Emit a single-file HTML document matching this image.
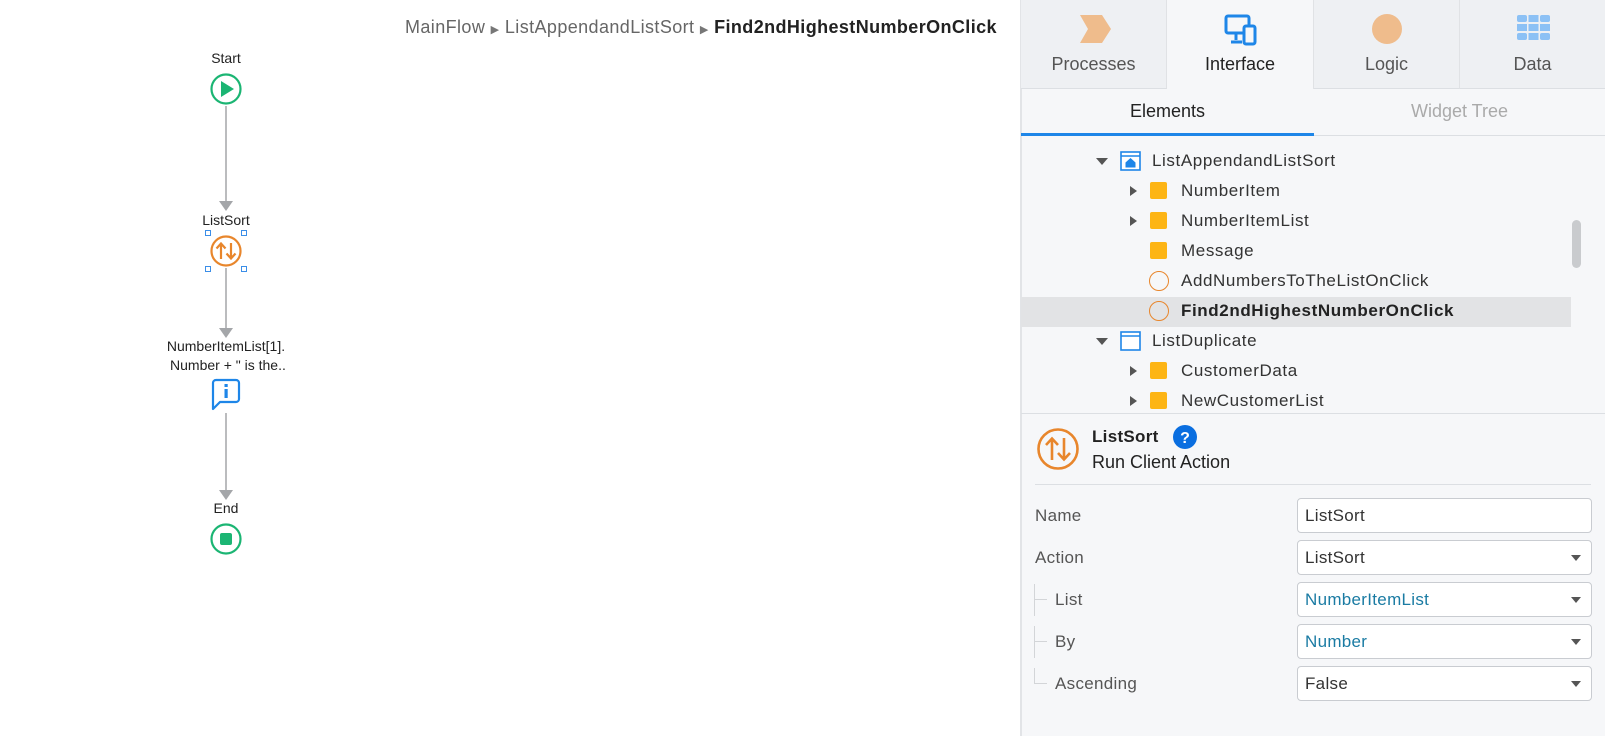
<!DOCTYPE html>
<html><head><meta charset="utf-8"><style>
*{margin:0;padding:0;box-sizing:border-box}
body{width:1605px;height:736px;background:#fff;position:relative;overflow:hidden;font-family:"Liberation Sans",sans-serif;color:#222}
.a{position:absolute;white-space:nowrap}
.lbl{font-size:14px;color:#222;text-align:center;width:200px;left:126px}
.tab{position:absolute;top:0;height:89px;background:#eef0f3;border-right:1px solid #e0e2e5;border-bottom:1px solid #dcdfe3}
.tab span{position:absolute;left:0;right:0;top:54px;text-align:center;font-size:18px;color:#555}
.tr{position:absolute;left:1021px;width:550px;height:30px;font-size:17px;line-height:30px;color:#333;letter-spacing:0.6px}
.car{position:absolute;width:0;height:0}
.cr{border-top:5px solid transparent;border-bottom:5px solid transparent;border-left:7px solid #555;top:10px}
.cd{border-left:6px solid transparent;border-right:6px solid transparent;border-top:7px solid #555;top:12px}
.sq{position:absolute;top:6px;width:17px;height:17px;background:#fdb515;border-radius:2px}
.ci{position:absolute;top:5px;width:20px;height:20px;border:1.8px solid #e8862c;border-radius:50%}
.fl{position:absolute;font-size:17px;color:#555;line-height:35px;letter-spacing:0.3px}
.inp{position:absolute;left:1297px;width:295px;height:35px;background:#fff;border:1px solid #c9ccd1;border-radius:4px;font-size:17px;line-height:33px;padding-left:7px;color:#333;letter-spacing:0.3px}
.dd:after{content:"";position:absolute;right:10px;top:14px;border-left:5px solid transparent;border-right:5px solid transparent;border-top:6px solid #555}
.blue{color:#1a7ba3}
</style></head><body>
<!-- breadcrumb -->
<div class="a" style="left:405px;top:17px;font-size:18px;color:#666;letter-spacing:0.4px">MainFlow <span style="font-size:11px;color:#777">&#9654;</span> ListAppendandListSort <span style="font-size:11px;color:#777">&#9654;</span> <b style="color:#222">Find2ndHighestNumberOnClick</b></div>

<!-- flow -->
<svg class="a" style="left:0;top:0" width="460" height="600">
<g stroke="#a4a6a9" stroke-width="1.5"><line x1="226" y1="106" x2="226" y2="203"/><line x1="226" y1="268" x2="226" y2="330"/><line x1="226" y1="413" x2="226" y2="492"/></g>
<g fill="#a4a6a9"><path d="M219 201h14l-7 10z"/><path d="M219 328h14l-7 10z"/><path d="M219 490h14l-7 10z"/></g>
<circle cx="226" cy="89" r="14.5" fill="#fff" stroke="#1bb573" stroke-width="2.2"/><path d="M221 81v16l13-8z" fill="#1bb573"/>
<circle cx="226" cy="251" r="14.5" fill="#fff" stroke="#e8862c" stroke-width="2.2"/>
<g stroke="#e8862c" stroke-width="2.2" fill="none"><path d="M221 259v-15M216.5 248.5l4.5-5 4.5 5M231 243v15M226.5 253.5l4.5 5 4.5-5"/></g>
<g fill="#fff" stroke="#3b8ee8" stroke-width="1"><rect x="205.5" y="230.5" width="5" height="5"/><rect x="241.5" y="230.5" width="5" height="5"/><rect x="205.5" y="266.5" width="5" height="5"/><rect x="241.5" y="266.5" width="5" height="5"/></g>
<path d="M213 383a3 3 0 0 1 3-3h20a3 3 0 0 1 3 3v16a3 3 0 0 1-3 3h-16l-7 7z" fill="#fff" stroke="#1e86e8" stroke-width="2.2" stroke-linejoin="round"/>
<rect x="224.5" y="389" width="3.2" height="9" fill="#1e86e8"/><rect x="224.5" y="384" width="3.2" height="3" fill="#1e86e8"/>
<circle cx="226" cy="539" r="14.5" fill="#fff" stroke="#1bb573" stroke-width="2.2"/><rect x="220" y="533" width="12" height="12" rx="2" fill="#1bb573"/>
</svg>
<div class="a lbl" style="top:50px">Start</div>
<div class="a lbl" style="top:212px">ListSort</div>
<div class="a lbl" style="top:337px;line-height:19px">NumberItemList[1].<br>&nbsp;Number + " is the..</div>
<div class="a lbl" style="top:500px">End</div>

<!-- panel -->
<div class="a" style="left:1020px;top:0;width:585px;height:736px;background:#f6f7f9;border-left:2px solid #e2e4e7"></div>
<div class="tab" style="left:1021px;width:146px"><svg class="a" style="left:59px;top:15px" width="32" height="28"><path d="M0 0h22l9 14-9 14H0l8-14z" fill="#efbc8c"/></svg><span>Processes</span></div>
<div class="tab" style="left:1167px;width:147px;background:#f6f7f9;border-bottom:none"><svg class="a" style="left:57px;top:14px" width="34" height="32"><g fill="none" stroke="#1e86e8" stroke-width="3"><rect x="2" y="2" width="23" height="17" rx="2"/><rect x="20" y="12" width="11" height="18" rx="2" fill="#f6f7f9"/></g><path d="M12 20v6M7 28h11" stroke="#1e86e8" stroke-width="3"/></svg><span style="color:#222">Interface</span></div>
<div class="tab" style="left:1314px;width:146px"><svg class="a" style="left:57px;top:13px" width="32" height="32"><circle cx="16" cy="16" r="15" fill="#efbc8c"/></svg><span>Logic</span></div>
<div class="tab" style="left:1460px;width:145px;border-right:none"><svg class="a" style="left:57px;top:15px" width="33" height="26"><g fill="#8cc1f5"><rect x="0" y="0" width="10" height="7" rx="2"/><rect x="11.5" y="0" width="10" height="7"/><rect x="23" y="0" width="10" height="7" rx="2"/><rect x="0" y="9" width="10" height="7"/><rect x="11.5" y="9" width="10" height="7"/><rect x="23" y="9" width="10" height="7"/><rect x="0" y="18" width="10" height="7" rx="2"/><rect x="11.5" y="18" width="10" height="7"/><rect x="23" y="18" width="10" height="7" rx="2"/></g></svg><span>Data</span></div>
<div class="a" style="left:1021px;top:89px;width:584px;height:47px;border-bottom:1px solid #dcdfe3"></div>
<div class="a" style="left:1021px;top:133px;width:293px;height:3px;background:#1e86e8"></div>
<div class="a" style="left:1021px;top:101px;width:293px;text-align:center;font-size:18px;color:#222">Elements</div>
<div class="a" style="left:1314px;top:101px;width:291px;text-align:center;font-size:18px;color:#aaa">Widget Tree</div>

<!-- tree -->
<div class="a" style="left:1021px;top:297px;width:550px;height:30px;background:#e2e3e5"></div>
<div class="a" style="left:1572px;top:220px;width:9px;height:48px;background:#c9cbce;border-radius:5px"></div>
<div class="tr" style="top:146px"><div class="car cd" style="left:75px"></div><svg class="a" style="left:99px;top:5px" width="21" height="20"><rect x="1" y="1" width="19" height="18" fill="#fff" stroke="#1e86e8" stroke-width="1.6"/><path d="M1 5h19" stroke="#1e86e8" stroke-width="1.5"/><path d="M10.5 7l-5 4.5v5h10v-5z" fill="#1e86e8"/></svg><span style="position:absolute;left:131px">ListAppendandListSort</span></div>
<div class="tr" style="top:176px"><div class="car cr" style="left:109px"></div><div class="sq" style="left:129px"></div><span style="position:absolute;left:160px">NumberItem</span></div>
<div class="tr" style="top:206px"><div class="car cr" style="left:109px"></div><div class="sq" style="left:129px"></div><span style="position:absolute;left:160px">NumberItemList</span></div>
<div class="tr" style="top:236px"><div class="sq" style="left:129px"></div><span style="position:absolute;left:160px">Message</span></div>
<div class="tr" style="top:266px"><div class="ci" style="left:128px"></div><span style="position:absolute;left:160px">AddNumbersToTheListOnClick</span></div>
<div class="tr" style="top:296px"><div class="ci" style="left:128px"></div><b style="position:absolute;left:160px;color:#222">Find2ndHighestNumberOnClick</b></div>
<div class="tr" style="top:326px"><div class="car cd" style="left:75px"></div><svg class="a" style="left:99px;top:5px" width="21" height="20"><rect x="1" y="1" width="19" height="18" fill="#fff" stroke="#1e86e8" stroke-width="1.6"/><path d="M1 5h19" stroke="#1e86e8" stroke-width="1.5"/></svg><span style="position:absolute;left:131px">ListDuplicate</span></div>
<div class="tr" style="top:356px"><div class="car cr" style="left:109px"></div><div class="sq" style="left:129px"></div><span style="position:absolute;left:160px">CustomerData</span></div>
<div class="tr" style="top:386px;height:27px;overflow:hidden"><div class="car cr" style="left:109px"></div><div class="sq" style="left:129px"></div><span style="position:absolute;left:160px">NewCustomerList</span></div>
<div class="a" style="left:1021px;top:413px;width:584px;height:1px;background:#dcdfe3"></div>

<!-- properties header -->
<svg class="a" style="left:1036px;top:427px" width="44" height="44"><circle cx="22" cy="22" r="19.5" fill="none" stroke="#e8862c" stroke-width="2.6"/><g stroke="#e8862c" stroke-width="2.6" fill="none"><path d="M16 33V12M10 18l6-6.5 6 6.5M28 11v21M22 26l6 6.5 6-6.5"/></g></svg>
<div class="a" style="left:1092px;top:427px;font-size:17px;font-weight:bold;color:#222;letter-spacing:0.3px">ListSort</div>
<svg class="a" style="left:1173px;top:425px" width="24" height="24"><circle cx="12" cy="12" r="12" fill="#0a6ee0"/><text x="12" y="18" font-family="Liberation Sans" font-weight="bold" font-size="16" fill="#fff" text-anchor="middle">?</text></svg>
<div class="a" style="left:1092px;top:452px;font-size:18px;color:#222">Run Client Action</div>
<div class="a" style="left:1035px;top:484px;width:556px;height:1px;background:#dcdfe3"></div>

<!-- form -->
<div class="fl" style="left:1035px;top:498px">Name</div><div class="inp" style="top:498px">ListSort</div>
<div class="fl" style="left:1035px;top:540px">Action</div><div class="inp dd" style="top:540px">ListSort</div>
<div class="fl" style="left:1055px;top:582px">List</div><div class="inp dd blue" style="top:582px">NumberItemList</div>
<div class="fl" style="left:1055px;top:624px">By</div><div class="inp dd blue" style="top:624px">Number</div>
<div class="fl" style="left:1055px;top:666px">Ascending</div><div class="inp dd" style="top:666px">False</div>
<div class="a" style="left:1034px;top:584px;width:1px;height:32px;background:#d3d5d8"></div>
<div class="a" style="left:1034px;top:626px;width:1px;height:32px;background:#d3d5d8"></div>
<div class="a" style="left:1034px;top:668px;width:1px;height:16px;background:#d3d5d8"></div>
<div class="a" style="left:1034px;top:599px;width:13px;height:1px;background:#d3d5d8"></div>
<div class="a" style="left:1034px;top:641px;width:13px;height:1px;background:#d3d5d8"></div>
<div class="a" style="left:1034px;top:683px;width:13px;height:1px;background:#d3d5d8"></div>
</body></html>
